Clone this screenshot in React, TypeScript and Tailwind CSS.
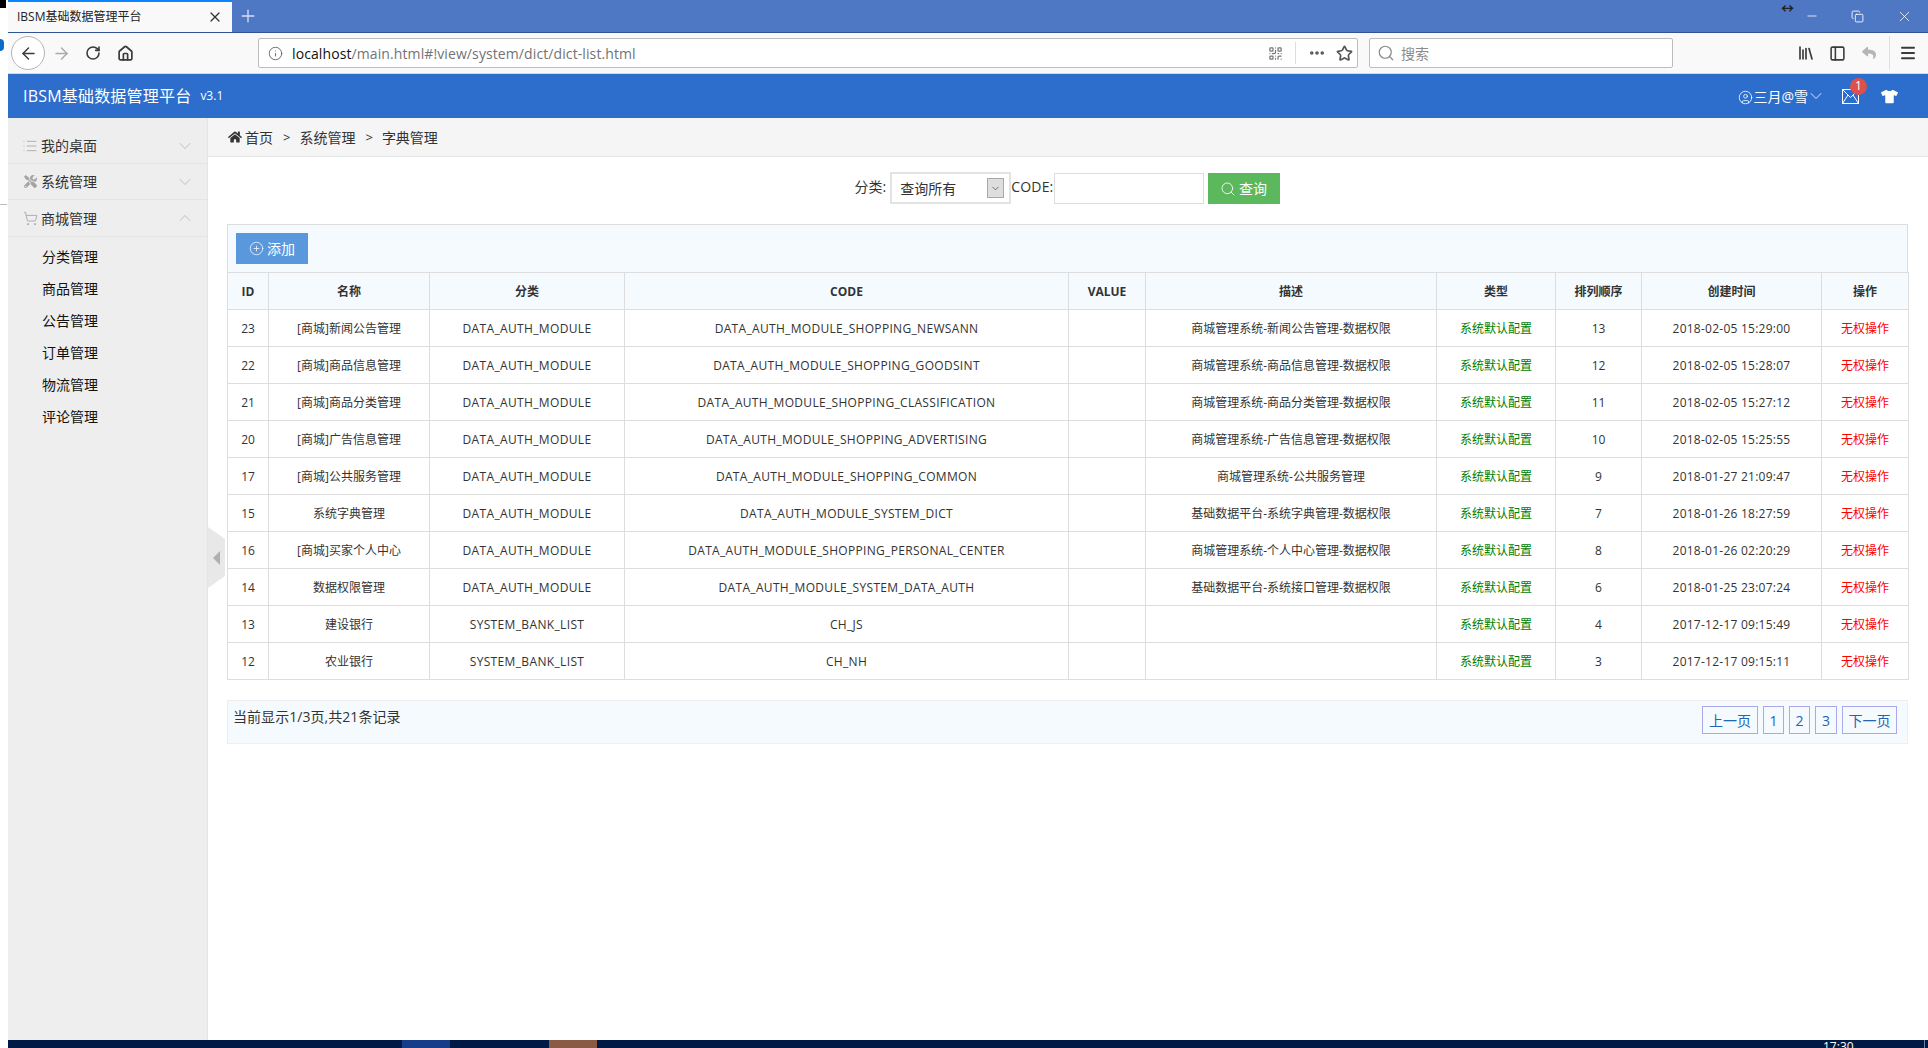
import { ArrowLeft, ArrowRight, RotateCw, Info, QrCode, Ellipsis, Star, Search, Library, PanelLeft, Menu, Minus, Copy, X, Plus, ChevronDown, ChevronUp, List, ShoppingCart, CirclePlus, CircleUser, House } from 'lucide-react';
import { FaHome, FaTools, FaTshirt, FaReply } from 'react-icons/fa';

const rows = [
  ['23', '[商城]新闻公告管理', 'DATA_AUTH_MODULE', 'DATA_AUTH_MODULE_SHOPPING_NEWSANN', '商城管理系统-新闻公告管理-数据权限', '13', '2018-02-05 15:29:00'],
  ['22', '[商城]商品信息管理', 'DATA_AUTH_MODULE', 'DATA_AUTH_MODULE_SHOPPING_GOODSINT', '商城管理系统-商品信息管理-数据权限', '12', '2018-02-05 15:28:07'],
  ['21', '[商城]商品分类管理', 'DATA_AUTH_MODULE', 'DATA_AUTH_MODULE_SHOPPING_CLASSIFICATION', '商城管理系统-商品分类管理-数据权限', '11', '2018-02-05 15:27:12'],
  ['20', '[商城]广告信息管理', 'DATA_AUTH_MODULE', 'DATA_AUTH_MODULE_SHOPPING_ADVERTISING', '商城管理系统-广告信息管理-数据权限', '10', '2018-02-05 15:25:55'],
  ['17', '[商城]公共服务管理', 'DATA_AUTH_MODULE', 'DATA_AUTH_MODULE_SHOPPING_COMMON', '商城管理系统-公共服务管理', '9', '2018-01-27 21:09:47'],
  ['15', '系统字典管理', 'DATA_AUTH_MODULE', 'DATA_AUTH_MODULE_SYSTEM_DICT', '基础数据平台-系统字典管理-数据权限', '7', '2018-01-26 18:27:59'],
  ['16', '[商城]买家个人中心', 'DATA_AUTH_MODULE', 'DATA_AUTH_MODULE_SHOPPING_PERSONAL_CENTER', '商城管理系统-个人中心管理-数据权限', '8', '2018-01-26 02:20:29'],
  ['14', '数据权限管理', 'DATA_AUTH_MODULE', 'DATA_AUTH_MODULE_SYSTEM_DATA_AUTH', '基础数据平台-系统接口管理-数据权限', '6', '2018-01-25 23:07:24'],
  ['13', '建设银行', 'SYSTEM_BANK_LIST', 'CH_JS', '', '4', '2017-12-17 09:15:49'],
  ['12', '农业银行', 'SYSTEM_BANK_LIST', 'CH_NH', '', '3', '2017-12-17 09:15:11'],
];

const columns = [
  { label: 'ID', width: 41 },
  { label: '名称', width: 161 },
  { label: '分类', width: 195 },
  { label: 'CODE', width: 444 },
  { label: 'VALUE', width: 77 },
  { label: '描述', width: 291 },
  { label: '类型', width: 119 },
  { label: '排列顺序', width: 86 },
  { label: '创建时间', width: 180 },
  { label: '操作', width: 87 },
];

const subMenu = ['分类管理', '商品管理', '公告管理', '订单管理', '物流管理', '评论管理'];

function BrowserChrome() {
  return (
    <>
      {/* tab strip */}
      <div className="flex h-[33px] shrink-0 items-stretch border-b border-[#2f5595] bg-[#4f78c4]">
        <div className="flex w-[224px] items-center justify-between border-t-2 border-[#0a84ff] bg-[#f9f9fa] pl-[9px] pr-[9px] text-[12px] text-[#222]">
          <span>IBSM基础数据管理平台</span>
          <X size={16} strokeWidth={1.8} className="text-[#333]" />
        </div>
        <div className="flex w-[32px] items-center justify-center text-[#d5e0f5]">
          <Plus size={20} strokeWidth={1.6} />
        </div>
        <div className="flex-1" />
        <div className="flex items-center gap-[32px] pr-[15px] text-white">
          <span className="-mt-[16px] -mr-[21px] text-[13px] font-bold leading-none text-[#222]">↔</span>
          <Minus size={14} strokeWidth={1.4} />
          <Copy size={13} strokeWidth={1.6} />
          <X size={17} strokeWidth={1.1} />
        </div>
      </div>
      {/* nav toolbar */}
      <div className="flex h-[41px] shrink-0 items-center border-b border-[#d9d9da] bg-[#f9f9fa] text-[#3b3b3b]">
        <div className="ml-[3px] flex h-[34px] w-[34px] items-center justify-center rounded-full border border-[#b5b5b5] bg-white">
          <ArrowLeft size={19} strokeWidth={1.8} />
        </div>
        <ArrowRight size={19} strokeWidth={1.8} className="ml-[7px] text-[#aaa]" />
        <RotateCw size={16} strokeWidth={2.4} className="ml-[14px]" />
        <House size={17} strokeWidth={2.4} className="ml-[16px]" />
        <div className="ml-[124px] flex h-[30px] w-[1100px] items-center rounded-[2px] border border-[#bdbdbd] bg-white">
          <Info size={15} strokeWidth={1.5} className="ml-[9px] text-[#666]" />
          <span className="ml-[9px] text-[14px] tracking-[0.1px] text-[#737373]">
            <span className="text-[#111]">localhost</span>/main.html#!view/system/dict/dict-list.html
          </span>
          <div className="flex-1" />
          <QrCode size={15} strokeWidth={2} className="text-[#777]" />
          <div className="ml-[12px] h-[22px] w-px bg-[#ddd]" />
          <Ellipsis size={18} strokeWidth={2.8} className="ml-[12px] text-[#555]" />
          <Star size={17} strokeWidth={2.4} className="ml-[10px] mr-[4px] text-[#555]" />
        </div>
        <div className="ml-[11px] flex h-[30px] w-[304px] items-center rounded-[2px] border border-[#bdbdbd] bg-white">
          <Search size={18} strokeWidth={1.6} className="ml-[7px] text-[#888]" />
          <span className="ml-[6px] text-[14px] text-[#8a8a8a]">搜索</span>
        </div>
        <Library size={18} strokeWidth={2.2} className="ml-[124px]" />
        <PanelLeft size={17} strokeWidth={2.2} className="ml-[14px]" />
        <FaReply size={14} className="ml-[16px] text-[#b5b5b5]" />
        <div className="ml-[13px] h-[34px] w-px bg-[#e0e0e0]" />
        <Menu size={18} strokeWidth={2.6} className="ml-[9px]" />
      </div>
    </>
  );
}

function AppHeader() {
  return (
    <div className="flex h-[44px] shrink-0 items-center bg-[#2d6dcc] text-white">
      <span className="ml-[15px] text-[16px] tracking-[0.2px]">IBSM基础数据管理平台</span>
      <span className="ml-[9px] text-[12px]">v3.1</span>
      <div className="flex-1" />
      <CircleUser size={15} strokeWidth={1.3} className="mt-[2px]" />
      <span className="text-[14px]">三月@雪</span>
      <ChevronDown size={20} strokeWidth={1} className="-ml-[2px]" />
      <div className="relative ml-[16px] mr-[22px]">
        {/* envelope with crossed folds */}
        <svg width="17" height="15" viewBox="0 0 17 15" fill="none" stroke="currentColor" strokeWidth="1">
          <rect x="0.5" y="0.5" width="16" height="14" />
          <path d="M0.5 0.5 L8.5 8.5 L16.5 0.5 M0.5 14.5 L6 6 M16.5 14.5 L11 6" />
        </svg>
        <span className="absolute -right-[8px] -top-[11px] flex h-[17px] w-[17px] items-center justify-center rounded-full bg-[#dd514c] text-[12px] leading-none">1</span>
      </div>
      <FaTshirt size={17} className="mr-[30px]" />
    </div>
  );
}

function Sidebar() {
  return (
    <aside className="w-[200px] shrink-0 border-r border-[#e5e5e5] bg-[#eeeeee] text-[14px] text-[#333]">
      <div className="flex h-[46px] items-center border-b border-[#e5e5e5] pl-[14px] pr-[12px] pt-[10px]">
        <span className="w-[19px]"><List size={16} strokeWidth={1.1} className="text-[#999]" /></span>
        <span className="flex-1">我的桌面</span>
        <ChevronDown size={20} strokeWidth={1} className="text-[#b5b5b5]" />
      </div>
      <div className="flex h-[36px] items-center border-b border-[#e5e5e5] pl-[14px] pr-[12px]">
        <span className="w-[19px] pl-[2px]"><FaTools size={13} className="text-[#a5a5a5]" /></span>
        <span className="flex-1">系统管理</span>
        <ChevronDown size={20} strokeWidth={1} className="text-[#b5b5b5]" />
      </div>
      <div className="flex h-[37px] items-center border-b border-[#e5e5e5] pl-[14px] pr-[12px]">
        <span className="w-[19px] pl-[1px]"><ShoppingCart size={15} strokeWidth={1.4} className="text-[#a5a5a5]" /></span>
        <span className="flex-1">商城管理</span>
        <ChevronUp size={20} strokeWidth={1} className="text-[#b5b5b5]" />
      </div>
      <ul className="pt-[3px] text-[#111]">
        {subMenu.map((name) => (
          <li key={name} className="flex h-[32px] items-center pl-[34px]">{name}</li>
        ))}
      </ul>
    </aside>
  );
}

function DictTable() {
  return (
    <table className="w-[1681px] table-fixed border-collapse text-center text-[12px] text-[#333]">
      <colgroup>
        {columns.map((c) => <col key={c.label} style={{ width: c.width }} />)}
      </colgroup>
      <thead>
        <tr className="h-[37px] bg-[#f5fafe]">
          {columns.map((c) => <th key={c.label} className="border border-[#dddddd] pt-[2px] font-bold">{c.label}</th>)}
        </tr>
      </thead>
      <tbody>
        {rows.map((r) => (
          <tr key={r[0]} className="h-[37px] bg-white">
            <td className="border border-[#dddddd] pt-[2px]">{r[0]}</td>
            <td className="border border-[#dddddd] pt-[2px]">{r[1]}</td>
            <td className="border border-[#dddddd] pt-[2px] tracking-[0.35px]">{r[2]}</td>
            <td className="border border-[#dddddd] pt-[2px] tracking-[0.32px]">{r[3]}</td>
            <td className="border border-[#dddddd]"></td>
            <td className="border border-[#dddddd] pt-[2px]">{r[4]}</td>
            <td className="border border-[#dddddd] pt-[2px] text-[#008000]">系统默认配置</td>
            <td className="border border-[#dddddd] pt-[2px]">{r[5]}</td>
            <td className="border border-[#dddddd] pt-[2px] tracking-[0.25px]">{r[6]}</td>
            <td className="border border-[#dddddd] pt-[2px] text-[#ff0000]">无权操作</td>
          </tr>
        ))}
      </tbody>
    </table>
  );
}

function PageButton({ label, width }: { label: string; width: string }) {
  return (
    <span className={`flex h-[28px] items-center justify-center border border-[#a9a9ea] text-[14px] text-[#2364b4] ${width}`}>{label}</span>
  );
}

function Content() {
  return (
    <main className="relative flex min-w-0 flex-1 flex-col bg-white">
      <div className="flex h-[39px] shrink-0 items-center border-b border-[#e5e5e5] bg-[#f5f5f5] pl-[20px] text-[14px] text-[#333]">
        <FaHome size={14} />
        <span className="ml-[3px]">首页</span>
        <span className="ml-[10px] pt-[2px] text-[13px]">&gt;</span>
        <span className="ml-[9px]">系统管理</span>
        <span className="ml-[10px] pt-[2px] text-[13px]">&gt;</span>
        <span className="ml-[9px]">字典管理</span>
      </div>

      <div className="mt-[15px] flex h-[32px] shrink-0 items-stretch justify-center pr-[2px] text-[14px] text-[#333]">
        <span className="mr-[4px] self-center pb-[3px]">分类:</span>
        <div className="flex w-[121px] items-center border-2 border-[#e3e3e3] pl-[8px] pr-[5px]">
          <span className="flex-1">查询所有</span>
          <span className="flex h-[20px] w-[17px] items-center justify-center border border-[#a9a9a9] bg-[#dedede]">
            <ChevronDown size={11} strokeWidth={1.5} className="text-[#444]" />
          </span>
        </div>
        <span className="self-center pb-[3px] tracking-[0.2px]">CODE:</span>
        <div className="mt-[1px] w-[150px] border border-[#dddddd]" />
        <div className="ml-[4px] mt-[1px] flex w-[72px] items-center justify-center gap-[3px] bg-[#5cb85c] text-white">
          <Search size={16} strokeWidth={1.3} />
          <span>查询</span>
        </div>
      </div>

      <div className="ml-[19px] mt-[20px] flex h-[48px] w-[1681px] shrink-0 items-start border border-b-0 border-[#dddddd] bg-[#f5fafe] p-[8px]">
        <div className="flex h-[31px] w-[72px] items-center justify-center gap-[3px] bg-[#5a98de] text-[14px] text-white">
          <CirclePlus size={15} strokeWidth={1.2} />
          <span>添加</span>
        </div>
      </div>
      <div className="ml-[19px]">
        <DictTable />
      </div>

      <div className="ml-[19px] mt-[20px] flex h-[44px] w-[1681px] shrink-0 items-start justify-between border border-[#eeeeee] bg-[#f5fafe] pl-[5px] pr-[10px] pt-[5px] text-[14px] text-[#333]">
        <span className="tracking-[0.05px]">当前显示1/3页,共21条记录</span>
        <div className="flex gap-[5px]">
          <PageButton label="上一页" width="w-[56px]" />
          <PageButton label="1" width="w-[21px]" />
          <PageButton label="2" width="w-[21px]" />
          <PageButton label="3" width="w-[22px]" />
          <PageButton label="下一页" width="w-[55px]" />
        </div>
      </div>

      {/* sidebar collapse handle */}
      <div className="absolute left-0 top-[409px] flex h-[61px] w-[17px] items-center justify-center bg-[#e8e8e8] [clip-path:polygon(0_0,100%_12px,100%_49px,0_100%)]">
        <span className="h-0 w-0 border-y-[7px] border-r-[7px] border-y-transparent border-r-[#b0b0b0]" />
      </div>
    </main>
  );
}

export default function App() {
  return (
    <div className="flex h-[1048px] w-[1928px] overflow-hidden bg-white font-['Open_Sans','Noto_Sans_CJK_SC',sans-serif]">
      {/* sliver of the desktop left of the browser window */}
      <div className="relative w-[8px] shrink-0 bg-white">
        <div className="h-[8px] w-[6px] bg-black" />
        <div className="absolute -left-[4px] top-[39px] h-[12px] w-[8px] rounded-full bg-[#0a6cc4]" />
        <div className="absolute left-0 top-[204px] h-px w-[7px] bg-[#bbb]" />
      </div>
      <div className="flex min-w-0 flex-1 flex-col">
        <BrowserChrome />
        <AppHeader />
        <div className="flex min-h-0 flex-1">
          <Sidebar />
          <Content />
        </div>
        {/* taskbar, cropped at the bottom edge */}
        <div className="flex h-[8px] shrink-0 overflow-hidden bg-[#001a45]">
          <div className="ml-[394px] w-[48px] bg-[#163d8a]" />
          <div className="ml-[99px] w-[48px] bg-[#8a5a44]" />
          <span className="ml-[1226px] text-[12px] leading-[14px] text-white">17:30</span>
          <div className="ml-[70px] w-px bg-[#6f7f9f]" />
        </div>
      </div>
    </div>
  );
}
